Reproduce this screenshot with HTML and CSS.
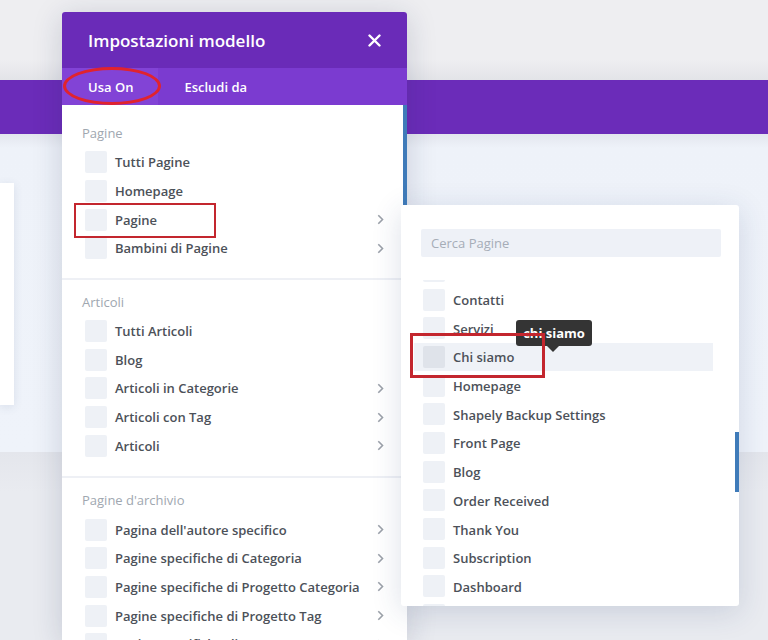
FILE: index.html
```html
<!DOCTYPE html>
<html lang="it">
<head>
<meta charset="utf-8">
<title>Impostazioni modello</title>
<link rel="stylesheet" href="styles.css">
</head>
<body>
<div class="page">
  <div class="top-band"></div>
  <div class="purple-band"></div>
  <div class="light-band"><div class="side-card"></div></div>
  <div class="bottom-band"></div>
</div>

<div class="modal">
  <div class="modal-head">
    <h2>Impostazioni modello</h2>
    <span class="close"><svg width="13" height="13" viewBox="0 0 13 13"><path d="M1.5 1.5 L11.5 11.5 M11.5 1.5 L1.5 11.5" stroke="#fff" stroke-width="2.4" stroke-linecap="round"/></svg></span>
  </div>
  <div class="tabs">
    <span class="tab active">Usa On</span>
    <span class="tab">Escludi da</span>
  </div>
  <div class="modal-body">
    <section class="group g1">
      <h3>Pagine</h3>
      <ul>
        <li class="row"><span class="box"></span><span class="label">Tutti Pagine</span></li>
        <li class="row"><span class="box"></span><span class="label">Homepage</span></li>
        <li class="row"><span class="box"></span><span class="label">Pagine</span><svg class="chev" width="7" height="11" viewBox="0 0 7 11"><path d="M1.3 1.3 L5.5 5.5 L1.3 9.7" fill="none" stroke="#9ba1a9" stroke-width="1.6"/></svg></li>
        <li class="row"><span class="box"></span><span class="label">Bambini di Pagine</span><svg class="chev" width="7" height="11" viewBox="0 0 7 11"><path d="M1.3 1.3 L5.5 5.5 L1.3 9.7" fill="none" stroke="#9ba1a9" stroke-width="1.6"/></svg></li>
      </ul>
    </section>
    <section class="group g2">
      <h3>Articoli</h3>
      <ul>
        <li class="row"><span class="box"></span><span class="label">Tutti Articoli</span></li>
        <li class="row"><span class="box"></span><span class="label">Blog</span></li>
        <li class="row"><span class="box"></span><span class="label">Articoli in Categorie</span><svg class="chev" width="7" height="11" viewBox="0 0 7 11"><path d="M1.3 1.3 L5.5 5.5 L1.3 9.7" fill="none" stroke="#9ba1a9" stroke-width="1.6"/></svg></li>
        <li class="row"><span class="box"></span><span class="label">Articoli con Tag</span><svg class="chev" width="7" height="11" viewBox="0 0 7 11"><path d="M1.3 1.3 L5.5 5.5 L1.3 9.7" fill="none" stroke="#9ba1a9" stroke-width="1.6"/></svg></li>
        <li class="row"><span class="box"></span><span class="label">Articoli</span><svg class="chev" width="7" height="11" viewBox="0 0 7 11"><path d="M1.3 1.3 L5.5 5.5 L1.3 9.7" fill="none" stroke="#9ba1a9" stroke-width="1.6"/></svg></li>
      </ul>
    </section>
    <section class="group g3">
      <h3>Pagine d'archivio</h3>
      <ul>
        <li class="row"><span class="box"></span><span class="label">Pagina dell'autore specifico</span><svg class="chev" width="7" height="11" viewBox="0 0 7 11"><path d="M1.3 1.3 L5.5 5.5 L1.3 9.7" fill="none" stroke="#9ba1a9" stroke-width="1.6"/></svg></li>
        <li class="row"><span class="box"></span><span class="label">Pagine specifiche di Categoria</span><svg class="chev" width="7" height="11" viewBox="0 0 7 11"><path d="M1.3 1.3 L5.5 5.5 L1.3 9.7" fill="none" stroke="#9ba1a9" stroke-width="1.6"/></svg></li>
        <li class="row"><span class="box"></span><span class="label">Pagine specifiche di Progetto Categoria</span><svg class="chev" width="7" height="11" viewBox="0 0 7 11"><path d="M1.3 1.3 L5.5 5.5 L1.3 9.7" fill="none" stroke="#9ba1a9" stroke-width="1.6"/></svg></li>
        <li class="row"><span class="box"></span><span class="label">Pagine specifiche di Progetto Tag</span><svg class="chev" width="7" height="11" viewBox="0 0 7 11"><path d="M1.3 1.3 L5.5 5.5 L1.3 9.7" fill="none" stroke="#9ba1a9" stroke-width="1.6"/></svg></li>
        <li class="row"><span class="box"></span><span class="label">Pagine specifiche di Tag</span><svg class="chev" width="7" height="11" viewBox="0 0 7 11"><path d="M1.3 1.3 L5.5 5.5 L1.3 9.7" fill="none" stroke="#9ba1a9" stroke-width="1.6"/></svg></li>
      </ul>
    </section>
    <div class="scroll-thumb"></div>
  </div>
</div>

<div class="dropdown">
  <div class="search">Cerca Pagine</div>
  <div class="list-view">
    <ul class="list">
      <li class="row"><span class="box"></span><span class="label"></span></li>
      <li class="row"><span class="box"></span><span class="label">Contatti</span></li>
      <li class="row"><span class="box"></span><span class="label">Servizi</span></li>
      <li class="row hover"><span class="box"></span><span class="label">Chi siamo</span></li>
      <li class="row"><span class="box"></span><span class="label">Homepage</span></li>
      <li class="row"><span class="box"></span><span class="label">Shapely Backup Settings</span></li>
      <li class="row"><span class="box"></span><span class="label">Front Page</span></li>
      <li class="row"><span class="box"></span><span class="label">Blog</span></li>
      <li class="row"><span class="box"></span><span class="label">Order Received</span></li>
      <li class="row"><span class="box"></span><span class="label">Thank You</span></li>
      <li class="row"><span class="box"></span><span class="label">Subscription</span></li>
      <li class="row"><span class="box"></span><span class="label">Dashboard</span></li>
      <li class="row"><span class="box"></span><span class="label"></span></li>
    </ul>
  </div>
  <div class="scroll-thumb dd-thumb"></div>
</div>

<div class="tooltip">chi siamo</div>

<span class="mark mark-ellipse"></span>
<span class="mark mark-pagine"></span>
<span class="mark mark-chi"></span>
</body>
</html>
```

FILE: styles.css
```css
* { box-sizing: border-box; }
html, body {
  margin: 0;
  padding: 0;
  width: 768px;
  height: 640px;
  overflow: hidden;
  font-family: "Open Sans", "Noto Sans", "Liberation Sans", sans-serif;
}
ul { list-style: none; margin: 0; padding: 0; }
h2, h3 { margin: 0; }

/* background page */
.page { display: flex; flex-direction: column; height: 640px; }
.top-band {
  height: 80px;
  background: linear-gradient(#eeeef1 0, #eeeef1 60px, #e3e4e8 80px);
}
.purple-band { height: 54px; background: #6b2cb9; }
.light-band {
  height: 318px;
  background: linear-gradient(#e3e6ee 0, #eef2f9 14px, #eff3fa 100%);
  padding-top: 49px;
}
.side-card {
  width: 14px;
  height: 222px;
  background: #fff;
  box-shadow: 0 2px 10px rgba(60, 80, 120, 0.12);
}
.bottom-band {
  flex: 1;
  background: linear-gradient(#e4e6ec, #e9ebf0 40px, #e9ebf0);
}

/* modal */
.modal {
  position: absolute;
  left: 62px;
  top: 12px;
  width: 345px;
  height: 628px;
  background: #fff;
  border-radius: 3px 3px 0 0;
  box-shadow: 0 5px 30px rgba(30, 40, 80, 0.18);
  overflow: hidden;
}
.modal-head {
  height: 56px;
  background: #6a2bb8;
  display: flex;
  align-items: center;
  justify-content: space-between;
  padding: 1px 26px 0 26px;
}
.modal-head h2 {
  color: #fff;
  font-size: 17px;
  font-weight: 600;
}
.close { display: flex; margin-top: -1px; }
.tabs {
  height: 37px;
  background: #7b3bd0;
  display: flex;
}
.tab {
  display: flex;
  align-items: center;
  padding: 1px 25px 0 26px;
  color: #fff;
  font-size: 13px;
  font-weight: 600;
}
.tab.active { background: #8243d6; }

.modal-body { position: relative; }
.scroll-thumb {
  position: absolute;
  right: 0;
  top: 0;
  width: 4px;
  height: 100px;
  background: #3f7bb9;
}
.group {
  padding: 19px 18px 15px 20px;
  border-bottom: 2px solid #eef0f5;
  margin-right: 4px;
}
.g2 { padding-top: 13px; padding-bottom: 16px; }
.g3 { padding-top: 13px; border-bottom: 0; }
.group h3 {
  font-size: 13px;
  line-height: 18px;
  font-weight: 400;
  color: #a0a7b0;
  margin-bottom: 6px;
}

.row {
  height: 28.7px;
  display: flex;
  align-items: center;
  padding-left: 3px;
}
.box {
  width: 22px;
  height: 22px;
  border-radius: 2px;
  background: #eef1f6;
  flex: none;
}
.label {
  flex: 1;
  margin-left: 8px;
  font-size: 13px;
  font-weight: 600;
  color: #4c5159;
  white-space: nowrap;
}
.chev { flex: none; margin-right: 1px; }

/* dropdown */
.dropdown {
  position: absolute;
  left: 401px;
  top: 205px;
  width: 338px;
  height: 401px;
  background: #fff;
  border-radius: 3px;
  box-shadow: 0 6px 30px rgba(40, 60, 110, 0.16);
  padding: 24px 18px 0 20px;
}
.search {
  height: 28px;
  background: #eef1f7;
  border-radius: 2px;
  padding-left: 10px;
  display: flex;
  align-items: center;
  font-size: 13px;
  color: #a6adb7;
}
.list-view {
  margin: 23px 8px 0 -7px;
  height: 326px;
  overflow: hidden;
}
.list { margin-top: -23.5px; }
.list .row { padding-left: 9px; }
.list .label { padding-top: 1px; }
.list .row.hover { background: #eff2f7; }
.list .row.hover .box { background: #dfe3ea; }
.dd-thumb { top: 227px; height: 60px; }

/* tooltip */
.tooltip {
  position: absolute;
  left: 516px;
  top: 320px;
  width: 76px;
  height: 26px;
  background: #343434;
  border-radius: 3px;
  color: #fff;
  font-size: 13px;
  font-weight: 700;
  display: flex;
  align-items: center;
  justify-content: center;
}
.tooltip::after {
  content: "";
  position: absolute;
  left: 31px;
  bottom: -6px;
  border-left: 6px solid transparent;
  border-right: 6px solid transparent;
  border-top: 6px solid #343434;
}

/* annotations */
.mark { position: absolute; display: block; }
.mark-ellipse {
  left: 63px;
  top: 67px;
  width: 98px;
  height: 38px;
  border: 3px solid #e1232d;
  border-radius: 50%;
}
.mark-pagine {
  left: 74px;
  top: 203px;
  width: 142px;
  height: 35px;
  border: 2px solid #c3262e;
}
.mark-chi {
  left: 410px;
  top: 333px;
  width: 135px;
  height: 45px;
  border: 3px solid #c3262e;
}
```
